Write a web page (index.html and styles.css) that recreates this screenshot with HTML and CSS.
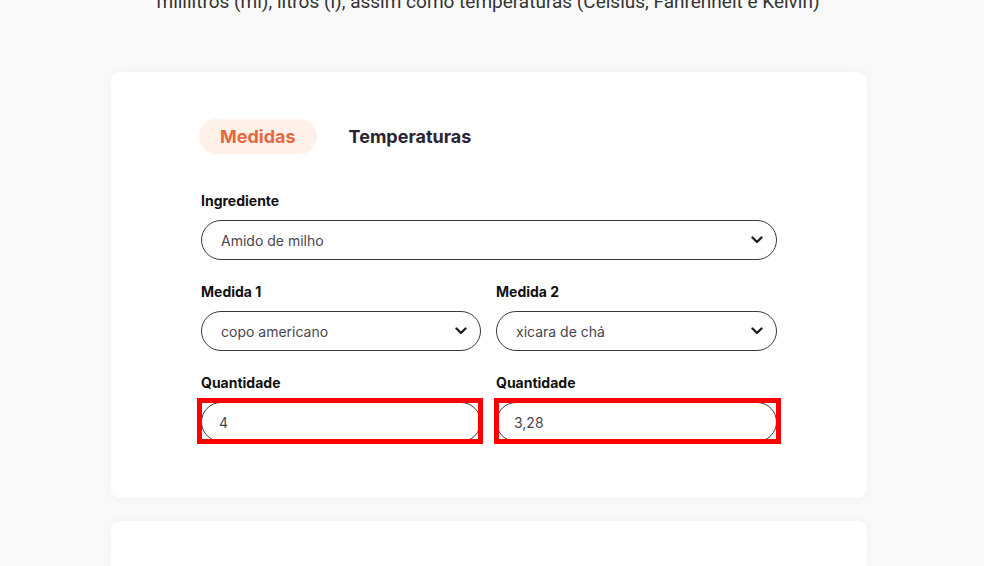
FILE: index.html
```html
<!DOCTYPE html>
<html lang="pt-BR">
<head>
<meta charset="utf-8">
<title>Conversor de medidas</title>
<link rel="stylesheet" href="styles.css">
</head>
<body>
<p class="intro">mililitros (ml), litros (l), assim como temperaturas (Celsius, Fahrenheit e Kelvin)</p>
<main class="wrap">
  <section class="card">
    <div class="tabs">
      <span class="tab active">Medidas</span>
      <span class="tab">Temperaturas</span>
    </div>
    <div class="form">
      <div class="field full">
        <label class="label">Ingrediente</label>
        <div class="select"><span>Amido de milho</span><svg class="chev" width="12" height="8" viewBox="0 0 12 8"><polyline points="1.5,1.5 6,6 10.5,1.5" fill="none" stroke="#222" stroke-width="2.4" stroke-linecap="round" stroke-linejoin="round"/></svg></div>
      </div>
      <div class="field">
        <label class="label">Medida 1</label>
        <div class="select"><span>copo americano</span><svg class="chev" width="12" height="8" viewBox="0 0 12 8"><polyline points="1.5,1.5 6,6 10.5,1.5" fill="none" stroke="#222" stroke-width="2.4" stroke-linecap="round" stroke-linejoin="round"/></svg></div>
      </div>
      <div class="field">
        <label class="label">Medida 2</label>
        <div class="select"><span>xicara de chá</span><svg class="chev" width="12" height="8" viewBox="0 0 12 8"><polyline points="1.5,1.5 6,6 10.5,1.5" fill="none" stroke="#222" stroke-width="2.4" stroke-linecap="round" stroke-linejoin="round"/></svg></div>
      </div>
      <div class="field">
        <label class="label">Quantidade</label>
        <div class="qty qty-left"><input class="input" type="text" value="4"></div>
      </div>
      <div class="field">
        <label class="label">Quantidade</label>
        <div class="qty qty-right"><input class="input" type="text" value="3,28"></div>
      </div>
    </div>
  </section>
  <section class="card second"></section>
</main>
</body>
</html>
```
FILE: styles.css
```css
* { box-sizing: border-box; }
html, body { margin: 0; padding: 0; }
body {
  background: #f9f9f9;
  font-family: Inter, "Noto Sans", sans-serif;
  color: #1d1a22;
  overflow: hidden;
  height: 566px;
}
.intro {
  margin: -11px 0 0;
  font-family: Roboto, "Liberation Sans", sans-serif;
  font-size: 19px;
  line-height: 26px;
  color: #333;
  text-align: center;
  padding-right: 8px;
}
.wrap {
  width: 756px;
  margin: 57px 0 0 111px;
}
.card {
  background: #fff;
  border-radius: 9px;
  box-shadow: 0 0 12px rgba(0,0,0,0.035);
  padding: 47px 90px 56px;
}
.card.second {
  margin-top: 23px;
  height: 45px;
  padding: 0;
  border-bottom-left-radius: 0;
  border-bottom-right-radius: 0;
}
.tabs {
  display: flex;
  gap: 11px;
}
.tab {
  height: 35px;
  line-height: 35px;
  padding: 0 21px 0 21px;
  border-radius: 18px;
  font-size: 18px;
  font-weight: 700;
  color: #2b2433;
  margin-left: -2px;
}
.tab + .tab { margin-left: 0; }
.tab.active {
  background: #fdf1ea;
  color: #e5693f;
}
.form {
  margin-top: 37px;
  display: grid;
  grid-template-columns: 280px 281px;
  column-gap: 15px;
  row-gap: 22px;
}
.field.full { grid-column: 1 / 3; }
.label {
  display: block;
  font-size: 14px;
  font-weight: 700;
  line-height: 20px;
  color: #111;
  margin-bottom: 9px;
}
.select {
  height: 40px;
  border: 1px solid #3a3a3a;
  border-radius: 20px;
  display: flex;
  align-items: center;
  justify-content: space-between;
  padding: 0 13px 0 19px;
  font-size: 14px;
  color: #4a4550;
}
.chev { display: block; }
.qty {
  position: relative;
}
.qty::after {
  content: "";
  position: absolute;
  top: -4px;
  bottom: -2px;
  border: 5px solid #ff0000;
  pointer-events: none;
}
.qty-left::after { left: -4px; right: -2px; }
.qty-right::after { left: -2px; right: -4px; }
.input {
  display: block;
  width: 100%;
  height: 40px;
  border: 1px solid #3a3a3a;
  border-radius: 20px;
  padding: 0 17px;
  font-family: Inter, "Noto Sans", sans-serif;
  font-size: 14px;
  color: #4a4550;
  background: #fff;
  outline: none;
}
```
